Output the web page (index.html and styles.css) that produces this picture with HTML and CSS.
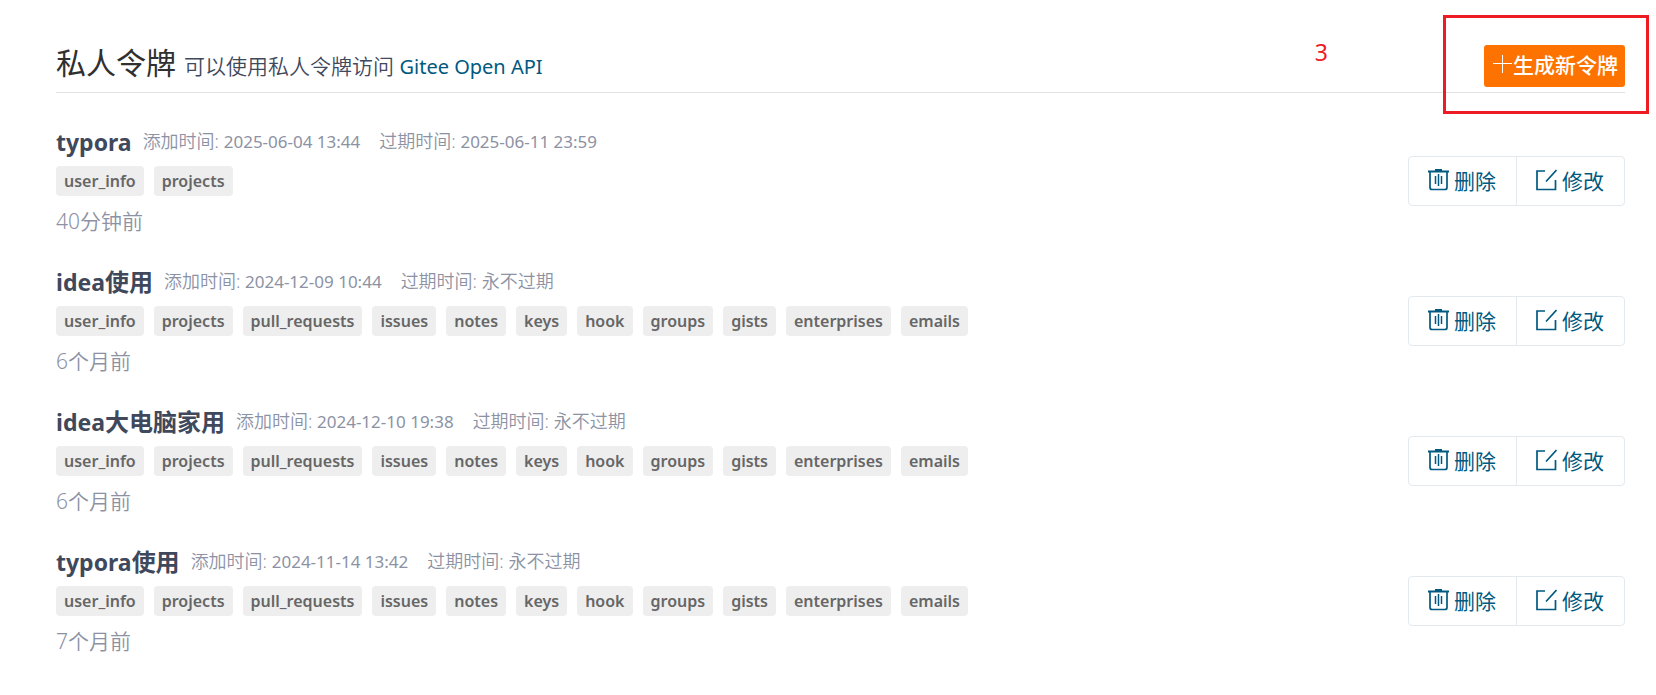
FILE: index.html
```html
<!DOCTYPE html>
<html lang="zh-CN">
<head>
    <meta charset="UTF-8">
    <meta name="viewport" content="width=device-width, initial-scale=1.0">
    <title>私人令牌 - Gitee</title>
    <link rel="stylesheet" href="styles.css">
</head>
<body>
    <!-- icons -->
    <svg width="0" height="0" class="icon-defs" aria-hidden="true">
        <symbol id="icon-trash" viewBox="0 0 21 22">
            <path d="M0 2.500h21M7 1h7"/>
            <path stroke-width="1.700" d="M2 3v15.500a2 2 0 0 0 2 2h13a2 2 0 0 0 2-2V3"/>
            <path stroke-width="1.500" d="M7.500 7v8M10.500 5v12M13.500 7v8"/>
        </symbol>
        <symbol id="icon-edit" viewBox="0 0 21 22">
            <path stroke-width="1.700" d="M9 2H1v18.500h18.500V11M20.500 1L10 12.500"/>
        </symbol>
    </svg>

    <main class="tokens">
        <header class="tokens-header">
            <h1>私人令牌</h1>
            <p class="subtitle">可以使用私人令牌访问 <a href="#">Gitee Open API</a></p>
            <span class="step">3</span>
            <div class="create">
                <button type="button" class="create-button">
                    <svg class="plus" viewBox="0 0 20 20"><path d="M9.500 1v18M0 9.500h19"/></svg>生成新令牌
                </button>
            </div>
        </header>

        <ul class="token-list">
            <li class="token">
                <div class="token-info">
                    <div class="token-title">
                        <h2><b>typora</b></h2>
                        <span class="date">添加时间: <time>2025-06-04 13:44</time></span>
                        <span class="date">过期时间: <time>2025-06-11 23:59</time></span>
                    </div>
                    <div class="scopes">
                        <span>user_info</span>
                        <span>projects</span>
                    </div>
                    <p class="ago">40分钟前</p>
                </div>
                <div class="actions">
                    <button type="button"><svg><use href="#icon-trash"/></svg>删除</button>
                    <button type="button"><svg><use href="#icon-edit"/></svg>修改</button>
                </div>
            </li>

            <li class="token">
                <div class="token-info">
                    <div class="token-title">
                        <h2><b>idea</b>使用</h2>
                        <span class="date">添加时间: <time>2024-12-09 10:44</time></span>
                        <span class="date">过期时间: 永不过期</span>
                    </div>
                    <div class="scopes">
                        <span>user_info</span>
                        <span>projects</span>
                        <span>pull_requests</span>
                        <span>issues</span>
                        <span>notes</span>
                        <span>keys</span>
                        <span>hook</span>
                        <span>groups</span>
                        <span>gists</span>
                        <span>enterprises</span>
                        <span>emails</span>
                    </div>
                    <p class="ago">6个月前</p>
                </div>
                <div class="actions">
                    <button type="button"><svg><use href="#icon-trash"/></svg>删除</button>
                    <button type="button"><svg><use href="#icon-edit"/></svg>修改</button>
                </div>
            </li>

            <li class="token">
                <div class="token-info">
                    <div class="token-title">
                        <h2><b>idea</b>大电脑家用</h2>
                        <span class="date">添加时间: <time>2024-12-10 19:38</time></span>
                        <span class="date">过期时间: 永不过期</span>
                    </div>
                    <div class="scopes">
                        <span>user_info</span>
                        <span>projects</span>
                        <span>pull_requests</span>
                        <span>issues</span>
                        <span>notes</span>
                        <span>keys</span>
                        <span>hook</span>
                        <span>groups</span>
                        <span>gists</span>
                        <span>enterprises</span>
                        <span>emails</span>
                    </div>
                    <p class="ago">6个月前</p>
                </div>
                <div class="actions">
                    <button type="button"><svg><use href="#icon-trash"/></svg>删除</button>
                    <button type="button"><svg><use href="#icon-edit"/></svg>修改</button>
                </div>
            </li>

            <li class="token">
                <div class="token-info">
                    <div class="token-title">
                        <h2><b>typora</b>使用</h2>
                        <span class="date">添加时间: <time>2024-11-14 13:42</time></span>
                        <span class="date">过期时间: 永不过期</span>
                    </div>
                    <div class="scopes">
                        <span>user_info</span>
                        <span>projects</span>
                        <span>pull_requests</span>
                        <span>issues</span>
                        <span>notes</span>
                        <span>keys</span>
                        <span>hook</span>
                        <span>groups</span>
                        <span>gists</span>
                        <span>enterprises</span>
                        <span>emails</span>
                    </div>
                    <p class="ago">7个月前</p>
                </div>
                <div class="actions">
                    <button type="button"><svg><use href="#icon-trash"/></svg>删除</button>
                    <button type="button"><svg><use href="#icon-edit"/></svg>修改</button>
                </div>
            </li>
        </ul>
    </main>
</body>
</html>
```
FILE: styles.css
```css
* {
    box-sizing: border-box;
}

body {
    margin: 0;
    background-color: #fff;
    color: #40485b;
    font-family: "Noto Sans", "Noto Sans CJK SC", sans-serif;
    font-size: 21px;
}

h1, h2, p, ul {
    margin: 0;
    padding: 0;
}

button {
    font-family: inherit;
    font-size: 21px;
    cursor: pointer;
}

svg {
    fill: none;
    stroke: currentColor;
    stroke-width: 2;
}

.icon-defs {
    position: absolute;
}

.tokens {
    padding: 45px 31px 30px 56px;
}

.tokens-header {
    display: flex;
    align-items: baseline;
    height: 48px;
    border-bottom: 1px solid #e3e3e3;
}

.tokens-header h1 {
    color: #303030;
    font-size: 30px;
    font-weight: 400;
    line-height: 36px;
}

.subtitle {
    margin-left: 8px;
    font-weight: 350;
    line-height: 36px;
}

.subtitle a {
    color: #005980;
    font-size: 20px;
    font-weight: 400;
    text-decoration: none;
}

.step {
    align-self: flex-start;
    margin-left: auto;
    margin-right: 156px;
    color: #ed1c24;
    font-size: 23px;
    line-height: 14px;
}

.create {
    position: relative;
    align-self: flex-start;
}

/* red marker round the create button */
.create::after {
    content: "";
    position: absolute;
    top: -30px;
    right: -24px;
    bottom: -27px;
    left: -41px;
    border: 3px solid #ed1c24;
    pointer-events: none;
}

.create-button {
    display: flex;
    align-items: center;
    height: 42px;
    padding: 0 7px 4px 9px;
    border: none;
    border-radius: 3px;
    background-color: #fe7300;
    color: #fff;
    font-weight: 500;
}

.plus {
    width: 20px;
    height: 20px;
    stroke-width: 1;
}

.token-list {
    display: flex;
    flex-direction: column;
    gap: 30px;
    padding-top: 33px;
    list-style: none;
}

.token {
    display: flex;
    align-items: center;
    justify-content: space-between;
}

.token-title {
    display: flex;
    align-items: flex-start;
    height: 34px;
}

.token-title h2 {
    font-size: 24px;
    font-weight: 700;
    line-height: 32px;
}

.token-title h2 b {
    font-size: 23px;
    font-weight: 700;
}

.date {
    margin-left: 11px;
    color: #8c92a4;
    font-size: 18px;
    font-weight: 350;
    line-height: 30px;
}

.date + .date {
    margin-left: 19px;
}

.date time {
    font-size: 17px;
    font-weight: 400;
}

.scopes {
    display: flex;
    gap: 10px;
    margin-top: 6px;
}

.scopes span {
    padding: 0 8px;
    border-radius: 4px;
    background-color: #eee;
    color: #666;
    font-size: 16px;
    font-weight: 600;
    line-height: 30px;
}

.ago {
    margin-top: 10px;
    color: #8c92a4;
    font-weight: 350;
    line-height: 30px;
}

.actions {
    display: flex;
    border: 1px solid #e3e9ed;
    border-radius: 4px;
}

.actions button {
    display: flex;
    align-items: center;
    gap: 5px;
    height: 48px;
    padding: 0 20px 2px 19px;
    border: none;
    background: none;
    color: #005980;
}

.actions button + button {
    border-left: 1px solid #e3e9ed;
}

.actions svg {
    width: 21px;
    height: 22px;
}
```
